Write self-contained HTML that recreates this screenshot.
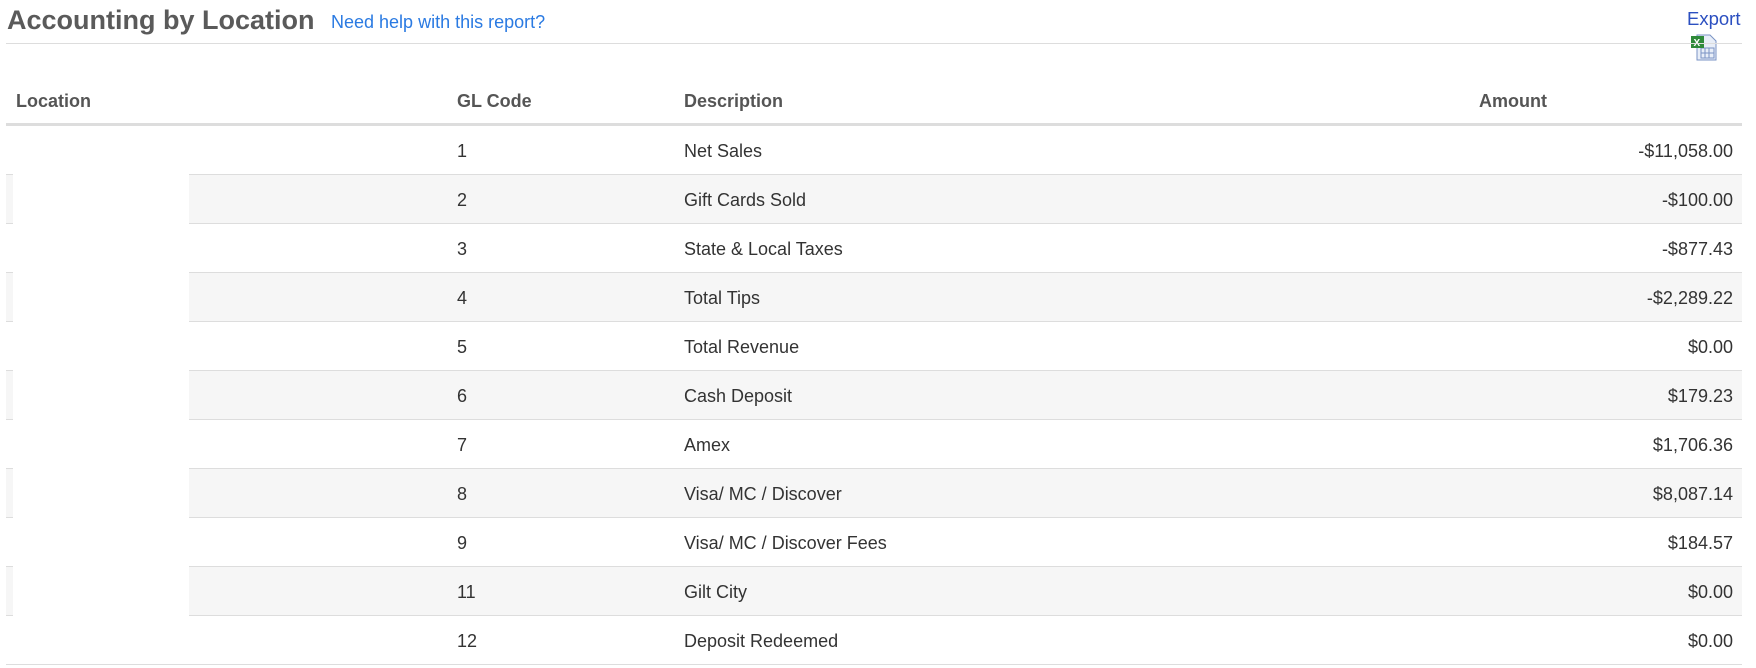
<!DOCTYPE html>
<html><head><style>
body{margin:0;width:1756px;height:668px;background:#fff;font-family:"Liberation Sans",sans-serif;position:relative;overflow:hidden;color:#333}
.t{position:absolute;white-space:nowrap}
.row{position:absolute;left:6px;width:1736px;height:48px;border-bottom:1px solid #ddd}
.g{background:#f6f6f6}
.g .w{position:absolute;left:7px;top:-1px;width:176px;height:50px;background:#fff}
.row span{position:absolute;top:15px;font-size:18px}
.h{font-size:18px;font-weight:bold;color:#555;top:91px}
</style></head><body>
<div class="t" style="left:7px;top:5px;font-size:27px;font-weight:bold;color:#5a5a5a">Accounting by Location</div>
<div class="t" style="left:331px;top:12px;font-size:18px;color:#2a7ae2">Need help with this report?</div>
<div class="t" style="left:1687px;top:8px;font-size:18.5px;color:#2b4fc0">Export</div>
<svg style="position:absolute;left:1689px;top:32px" width="30" height="30" viewBox="0 0 30 30">
<path d="M8 3h13l6 6v19H8z" fill="#e8eef8" stroke="#7a93c4"/>
<path d="M12 16h13v10H12zM12 21h13M16 16v10M20 16v10" fill="none" stroke="#7a93c4"/>
<rect x="2" y="4" width="13" height="12" fill="#2f8a3a"/>
<text x="4.5" y="14" font-size="10" fill="#fff" font-weight="bold" font-family="Liberation Sans">X</text>
</svg>
<div style="position:absolute;left:6px;top:43px;width:1736px;height:1px;background:#ddd"></div>
<div class="t h" style="left:16px">Location</div>
<div class="t h" style="left:457px">GL Code</div>
<div class="t h" style="left:684px">Description</div>
<div class="t h" style="left:1479px">Amount</div>
<div style="position:absolute;left:6px;top:123px;width:1736px;height:3px;background:#ddd"></div>
<div class="row" style="top:126px"><span style="left:451px">1</span><span style="left:678px">Net Sales</span><span style="right:9px">-$11,058.00</span></div>
<div class="row g" style="top:175px"><div class="w"></div><span style="left:451px">2</span><span style="left:678px">Gift Cards Sold</span><span style="right:9px">-$100.00</span></div>
<div class="row" style="top:224px"><span style="left:451px">3</span><span style="left:678px">State &amp; Local Taxes</span><span style="right:9px">-$877.43</span></div>
<div class="row g" style="top:273px"><div class="w"></div><span style="left:451px">4</span><span style="left:678px">Total Tips</span><span style="right:9px">-$2,289.22</span></div>
<div class="row" style="top:322px"><span style="left:451px">5</span><span style="left:678px">Total Revenue</span><span style="right:9px">$0.00</span></div>
<div class="row g" style="top:371px"><div class="w"></div><span style="left:451px">6</span><span style="left:678px">Cash Deposit</span><span style="right:9px">$179.23</span></div>
<div class="row" style="top:420px"><span style="left:451px">7</span><span style="left:678px">Amex</span><span style="right:9px">$1,706.36</span></div>
<div class="row g" style="top:469px"><div class="w"></div><span style="left:451px">8</span><span style="left:678px">Visa/ MC / Discover</span><span style="right:9px">$8,087.14</span></div>
<div class="row" style="top:518px"><span style="left:451px">9</span><span style="left:678px">Visa/ MC / Discover Fees</span><span style="right:9px">$184.57</span></div>
<div class="row g" style="top:567px"><div class="w"></div><span style="left:451px">11</span><span style="left:678px">Gilt City</span><span style="right:9px">$0.00</span></div>
<div class="row" style="top:616px"><span style="left:451px">12</span><span style="left:678px">Deposit Redeemed</span><span style="right:9px">$0.00</span></div>
</body></html>
